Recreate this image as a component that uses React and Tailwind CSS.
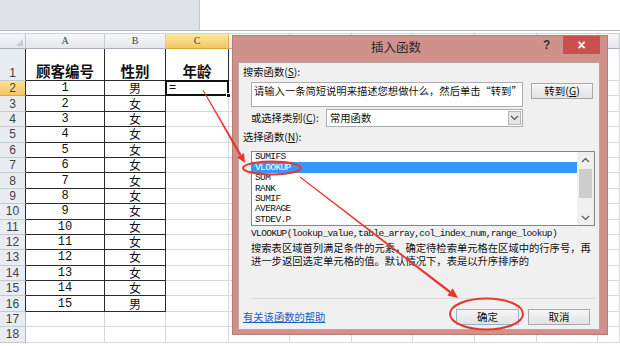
const COL_W = ['w-[26px]', 'w-[79px]', 'w-[61px]', 'w-[63px]', 'w-[61px]', 'w-[62px]', 'w-[61px]', 'w-[62px]', 'w-[62px]', 'w-[61px]', 'w-[22px]']
const LETTERS = ['', 'A', 'B', 'C', '', '', '', '', '', '', '']
const GENDER = ['男', '女', '女', '女', '女', '女', '女', '女', '女', '女', '女', '女', '女', '女', '男']
const ROWS = Array.from({ length: 18 }, (_, i) => i + 1)
const FUNCS = ['SUMIFS', 'VLOOKUP', 'SUM', 'RANK', 'SUMIF', 'AVERAGE', 'STDEV.P']

const cjk = "font-['Noto_Sans_CJK_SC',sans-serif]"

function HeaderRow() {
  return (
    <div className="flex h-[15px]">
      {LETTERS.map((l, c) => {
        if (c === 0) {
          return (
            <div key={c} className={`${COL_W[c]} flex items-end justify-end border-r border-b border-r-[#c3c8cf] border-b-[#a9b0ba] bg-gradient-to-b from-[#f3f5f8] to-[#e3e6eb] pr-[2px] pb-[2px]`}>
              <div className="h-0 w-0 border-l-[7px] border-t-[7px] border-l-transparent border-t-transparent border-r-0 border-b-[7px] border-b-[#c9cdd3]" />
            </div>
          )
        }
        const active = c === 3
        return (
          <div
            key={c}
            className={`${COL_W[c]} flex items-center justify-center border-r border-b text-[10px] leading-none text-[#444] font-['Liberation_Serif',serif] ${
              active
                ? 'bg-gradient-to-b from-[#fbe7a6] to-[#f3c75e] border-r-[#e0b04f] border-b-[#d9a13a]'
                : 'bg-gradient-to-b from-[#f6f7f9] to-[#e4e7ec] border-r-[#c8ccd2] border-b-[#a9b0ba]'
            }`}
          >
            {l}
          </div>
        )
      })}
    </div>
  )
}

function Cell({ r, c }) {
  const w = COL_W[c]
  if (c === 0) {
    const sel = r === 2
    return (
      <div
        className={`${w} flex ${r === 1 ? 'items-end pb-[1px]' : 'items-center'} justify-center border-r border-b text-[12px] leading-none text-[#444] font-['Liberation_Sans',sans-serif] ${
          sel ? 'bg-gradient-to-b from-[#fbe39a] to-[#f3c65d] border-b-[#dba648]' : 'bg-[#e9ecf0] border-b-[#c6cad0]'
        } ${r <= 16 ? 'border-r-[#2a2a2a]' : 'border-r-[#b3b8bf]'}`}
      >
        {r}
      </div>
    )
  }
  const inTable = (c === 1 || c === 2) && r <= 16
  const dark = inTable || (c === 3 && r === 1)
  const border = dark ? 'border-r-[#2a2a2a] border-b-[#2a2a2a]' : 'border-r-[#d6d8db] border-b-[#d6d8db]'
  let content = null
  if (r === 1 && c <= 3) {
    content = ['', '顾客编号', '性别', '年龄'][c]
    return (
      <div className={`${w} flex items-end justify-center border-r border-b ${border} pb-[2px] text-[14.5px] leading-none font-bold text-[#111] ${cjk}`}>
        {content}
      </div>
    )
  }
  if (c === 1 && r <= 16) content = r - 1
  if (c === 2 && r <= 16) content = GENDER[r - 2]
  if (c === 3 && r === 2) {
    return (
      <div className={`${w} relative flex items-center border-r border-b ${border} pl-[3px] text-[12px] leading-none text-[#111] font-['Liberation_Mono',monospace]`}>
        =
        <div className="absolute -left-[1px] -top-[1px] -right-[1px] -bottom-[1px] border-2 border-[#111]" />
        <div className="absolute -right-[3px] -bottom-[3px] h-[5px] w-[5px] border border-white bg-[#111]" />
      </div>
    )
  }
  return (
    <div
      className={`${w} flex items-center justify-center border-r border-b ${border} text-[12px] leading-none text-[#111] ${
        c === 1 ? "font-['Liberation_Mono',monospace]" : cjk
      }`}
    >
      {content}
    </div>
  )
}

function Chevron({ up }) {
  return (
    <svg width="9" height="6" viewBox="0 0 9 6">
      <path d={up ? 'M1 5 L4.5 1.5 L8 5' : 'M1 1 L4.5 4.5 L8 1'} fill="none" stroke="#555" strokeWidth="1.2" />
    </svg>
  )
}

function Btn({ children, def, w }) {
  return (
    <div
      className={`${w} flex h-[16px] items-center justify-center border bg-gradient-to-b from-[#f6f6f6] to-[#e2e2e2] text-[10.5px] leading-none text-[#111] ${
        def ? 'border-[#8bb6dd]' : 'border-[#a9a9a9]'
      }`}
    >
      {children}
    </div>
  )
}

function Dialog() {
  return (
    <div className={`absolute left-[232px] top-[35px] flex h-[300px] w-[376px] flex-col border border-[#b97a72] bg-[#cf928b] pl-[5px] pr-[7px] pb-[4px] ${cjk}`}>
      <div className="flex h-[26px] shrink-0 items-start">
        <div className="w-[255px] pl-[133px] pt-[5px] text-[12.5px] leading-none text-[#2a2a2a]">插入函数</div>
        <div className="ml-[50px] pt-[3px] text-[12px] font-bold leading-none text-[#333] font-['Liberation_Sans',sans-serif]">?</div>
        <div className="ml-auto flex h-[18px] w-[37px] items-center justify-center bg-[#c8504f] text-[14px] font-bold leading-none text-white font-['Liberation_Sans',sans-serif]">
          ×
        </div>
      </div>
      <div className="flex flex-1 flex-col border border-[#b9a5a2] bg-[#f0f0f0] text-[10.3px] leading-none text-[#111]">
        <div className="ml-[4px] mt-[4px] h-[12px]">搜索函数(<span className="underline">S</span>):</div>
        <div className="mt-[3px] flex items-start">
          <div className="ml-[12px] h-[25px] w-[272px] border border-[#abadb3] bg-white px-[2px] pt-[3px]">请输入一条简短说明来描述您想做什么，然后单击“转到”</div>
          <div className="ml-[8px] mt-[1px]">
            <Btn w="w-[62px]">转到(<span className="underline">G</span>)</Btn>
          </div>
        </div>
        <div className="mt-[2px] flex h-[18px] items-center">
          <div className="ml-[12px] w-[75px]">或选择类别(<span className="underline">C</span>):</div>
          <div className="flex h-[18px] w-[197px] items-center border border-[#abadb3] bg-white">
            <div className="flex-1 pl-[3px]">常用函数</div>
            <div className="mr-[1px] flex h-[14px] w-[13px] items-center justify-center border border-[#b5b5b5] bg-[#e6e6e6]">
              <Chevron />
            </div>
          </div>
        </div>
        <div className="ml-[4px] mt-[5px] h-[12px]">选择函数(<span className="underline">N</span>):</div>
        <div className="ml-[12px] mt-[7px] flex h-[75px] w-[344px] border border-[#828790] bg-white">
          <div className="flex-1 font-['Liberation_Mono',monospace] text-[9.5px] tracking-[-0.6px]">
            {FUNCS.map((f, i) => (
              <div key={f} className={`flex h-[10.4px] items-center pl-[3px] ${i === 1 ? 'bg-[#3399ff] text-white' : 'text-[#111]'}`}>
                {f}
              </div>
            ))}
          </div>
          <div className="flex w-[17px] flex-col bg-[#f0f0f0]">
            <div className="flex h-[15px] items-center justify-center"><Chevron up /></div>
            <div className="mx-[2px] mt-[2px] h-[29px] bg-[#cdcdcd]" />
            <div className="flex-1" />
            <div className="flex h-[15px] items-center justify-center"><Chevron /></div>
          </div>
        </div>
        <div className="ml-[12px] mt-[2px] h-[12px] font-['Liberation_Mono',monospace] text-[9.5px] tracking-[-0.6px] leading-[12px]">
          VLOOKUP(lookup_value,table_array,col_index_num,range_lookup)
        </div>
        <div className="ml-[12px] mt-[1px] w-[346px] leading-[13px]">
          <div>搜索表区域首列满足条件的元素，确定待检索单元格在区域中的行序号，再</div>
          <div>进一步返回选定单元格的值。默认情况下，表是以升序排序的</div>
        </div>
        <div className="ml-[12px] mt-[31px] h-0 w-[344px] border-t border-[#dcdcdc]" />
        <div className="mt-[10px] flex items-center">
          <div className="ml-[4px] w-[213px] text-[#1a5fc4] underline">有关该函数的帮助</div>
          <Btn def w="w-[63px]">确定</Btn>
          <div className="ml-[9px]">
            <Btn w="w-[62px]">取消</Btn>
          </div>
        </div>
      </div>
    </div>
  )
}

function Annotations() {
  return (
    <svg className="pointer-events-none absolute left-0 top-0" width="620" height="346" viewBox="0 0 620 346">
      <polygon points="202.6,90.3 203.4,89.8 241.5,154.6 239.5,155.8" fill="#e8362c" />
      <polygon points="244,153.2 237,157.2 245,163" fill="#e8362c" />
      <ellipse cx="272" cy="168" rx="29" ry="6.5" fill="none" stroke="#e8362c" strokeWidth="2" />
      <polygon points="299.7,177.4 300.3,176.6 450.7,291.1 449.3,292.9" fill="#e8362c" />
      <polygon points="447.3,295.5 452.8,288.3 458,298" fill="#e8362c" />
      <ellipse cx="486.5" cy="314" rx="36.5" ry="15.5" fill="none" stroke="#e8362c" strokeWidth="2" />
    </svg>
  )
}

export default function App() {
  return (
    <div className="relative h-[346px] w-[620px] overflow-hidden bg-white">
      <div className="flex h-[31px] border-b border-[#b4b9c0]">
        <div className="w-[200px] border-r border-[#c5c9cf] bg-[#dfe3e8]" />
      </div>
      <div className="h-[3px] border-b border-[#cfd3d8]" />
      <HeaderRow />
      {ROWS.map((r) => (
        <div key={r} className={`flex ${r === 1 ? 'h-[32px]' : 'h-[15.4px]'}`}>
          {COL_W.map((_, c) => (
            <Cell key={c} r={r} c={c} />
          ))}
        </div>
      ))}
      <Dialog />
      <Annotations />
    </div>
  )
}
